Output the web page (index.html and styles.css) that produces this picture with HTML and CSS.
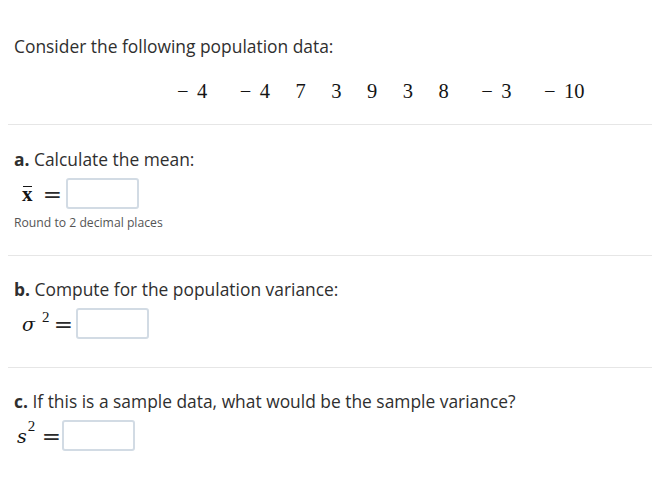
FILE: index.html
```html
<!DOCTYPE html>
<html lang="en">
<head>
<meta charset="utf-8">
<title>Population data</title>
<link rel="stylesheet" href="styles.css">
</head>
<body>
<div class="page">
  <section class="intro">
    <p class="lead">Consider the following population data:</p>
    <div class="data">
      <span class="num neg"><span class="minus">−</span>4</span>
      <span class="num neg"><span class="minus">−</span>4</span>
      <span class="num">7</span>
      <span class="num">3</span>
      <span class="num">9</span>
      <span class="num">3</span>
      <span class="num">8</span>
      <span class="num neg"><span class="minus">−</span>3</span>
      <span class="num neg"><span class="minus">−</span>10</span>
    </div>
  </section>
  <section class="part part-a">
    <p class="q"><b>a.</b> Calculate the mean:</p>
    <div class="answer">
      <span class="math xbar">x</span>
      <span class="eq eq-a">=</span>
      <input class="box" type="text" aria-label="mean">
    </div>
    <p class="note">Round to 2 decimal places</p>
  </section>
  <section class="part part-b">
    <p class="q"><b>b.</b> Compute for the population variance:</p>
    <div class="answer">
      <span class="math sym sigma">σ</span><sup class="math sup sup-b">2</sup>
      <span class="eq eq-b">=</span>
      <input class="box" type="text" aria-label="population variance">
    </div>
  </section>
  <section class="part part-c">
    <p class="q"><b>c.</b> If this is a sample data, what would be the sample variance?</p>
    <div class="answer">
      <span class="math sym s">s</span><sup class="math sup sup-c">2</sup>
      <span class="eq eq-c">=</span>
      <input class="box" type="text" aria-label="sample variance">
    </div>
  </section>
</div>
</body>
</html>
```
FILE: styles.css
```css
html, body {
  margin: 0;
  padding: 0;
  background: #ffffff;
}

body {
  font-family: "Open Sans", "Liberation Sans", sans-serif;
  color: #2f2f2f;
}

.page {
  padding-left: 8px;
}

p {
  margin: 0;
}

.intro {
  padding: 34px 6px 21px;
  border-bottom: 1px solid #e6e6e6;
}

.lead, .q {
  font-size: 17.4px;
  line-height: 24px;
}

.q b {
  font-weight: 700;
}

.data {
  display: flex;
  align-items: baseline;
  gap: 25.5px;
  margin-top: 21px;
  padding-left: 163px;
  font-family: "Liberation Serif", "DejaVu Serif", serif;
  font-size: 20.5px;
  line-height: 24px;
  color: #141414;
}

.num.neg {
  margin-left: 7px;
}

.num.neg:first-child {
  margin-left: 0;
}

.minus {
  display: inline-block;
  width: 20px;
}

.part {
  padding: 21px 6px 24px;
  border-bottom: 1px solid #e6e6e6;
}

.part-a {
  padding-top: 22px;
}

.part-b {
  padding-bottom: 28px;
}

.part-c {
  border-bottom: none;
}

.answer {
  display: flex;
  align-items: center;
  margin-top: 7px;
  height: 31px;
}

.math {
  font-family: "Liberation Serif", "DejaVu Serif", serif;
  font-size: 21px;
  line-height: 24px;
  color: #141414;
}

.xbar {
  position: relative;
  margin-left: 8px;
  font-weight: 700;
  font-size: 21px;
}

.xbar::before {
  content: "";
  position: absolute;
  left: 1px;
  right: 1px;
  top: 4px;
  border-top: 1.5px solid #141414;
}

.sym {
  font-family: "DejaVu Serif", "Liberation Serif", serif;
  font-style: italic;
  font-size: 19px;
}

.sigma {
  margin-left: 8px;
}

.s {
  margin-left: 3px;
}

.sup {
  font-family: "Liberation Serif", "DejaVu Serif", serif;
  font-size: 15px;
  line-height: 15px;
  align-self: flex-start;
  margin-top: 0;
}

.sup-b {
  margin-left: 7px;
  margin-top: 2px;
}

.sup-c {
  margin-left: 1px;
  margin-top: -1px;
}

.eq {
  display: inline-flex;
  justify-content: center;
  width: 16px;
  font-family: "DejaVu Serif", "Liberation Serif", serif;
  font-size: 23px;
  line-height: 24px;
  color: #2a2a2a;
}

.eq-a {
  margin-left: 12px;
  margin-right: 5px;
}

.eq-b {
  margin-left: 6px;
  margin-right: 5px;
}

.eq-c {
  margin-left: 8px;
  margin-right: 3px;
}

.box {
  box-sizing: border-box;
  width: 73px;
  height: 31px;
  margin: 0;
  border: 2px solid #d2dbe4;
  border-radius: 3px;
  background: #ffffff;
  padding: 0 6px;
  font: inherit;
}

.note {
  margin-top: 6px;
  font-size: 12.2px;
  line-height: 16px;
  color: #555555;
}
```
